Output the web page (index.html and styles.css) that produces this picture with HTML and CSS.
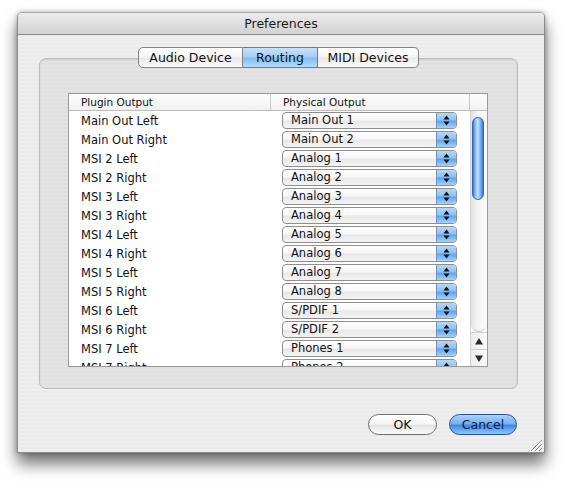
FILE: index.html
```html
<!DOCTYPE html>
<html lang="en">
<head>
  <meta charset="UTF-8">
  <title>Preferences</title>
  <link rel="stylesheet" href="styles.css">
</head>
<body>

  <div class="window">
    <div class="titlebar">Preferences</div>

    <div class="content">
      <div class="tabs">
        <span class="tab tab-audio">Audio Device</span>
        <span class="tab tab-routing active">Routing</span>
        <span class="tab tab-midi">MIDI Devices</span>
      </div>

      <div class="tabbox">
        <div class="table">
          <div class="thead">
            <div class="th col-name">Plugin Output</div>
            <div class="th col-out">Physical Output</div>
            <div class="th col-corner"></div>
          </div>
          <div class="tbody">
            <div class="rows">
              <div class="row"><span class="name">Main Out Left</span><div class="popup"><span class="label">Main Out 1</span><span class="arrows"><svg width="7" height="11" viewBox="0 0 7 11"><polygon points="0.5,4.5 6.5,4.5 3.5,0.5"/><polygon points="0.5,6.5 6.5,6.5 3.5,10.5"/></svg></span></div></div>
              <div class="row"><span class="name">Main Out Right</span><div class="popup"><span class="label">Main Out 2</span><span class="arrows"><svg width="7" height="11" viewBox="0 0 7 11"><polygon points="0.5,4.5 6.5,4.5 3.5,0.5"/><polygon points="0.5,6.5 6.5,6.5 3.5,10.5"/></svg></span></div></div>
              <div class="row"><span class="name">MSI 2 Left</span><div class="popup"><span class="label">Analog 1</span><span class="arrows"><svg width="7" height="11" viewBox="0 0 7 11"><polygon points="0.5,4.5 6.5,4.5 3.5,0.5"/><polygon points="0.5,6.5 6.5,6.5 3.5,10.5"/></svg></span></div></div>
              <div class="row"><span class="name">MSI 2 Right</span><div class="popup"><span class="label">Analog 2</span><span class="arrows"><svg width="7" height="11" viewBox="0 0 7 11"><polygon points="0.5,4.5 6.5,4.5 3.5,0.5"/><polygon points="0.5,6.5 6.5,6.5 3.5,10.5"/></svg></span></div></div>
              <div class="row"><span class="name">MSI 3 Left</span><div class="popup"><span class="label">Analog 3</span><span class="arrows"><svg width="7" height="11" viewBox="0 0 7 11"><polygon points="0.5,4.5 6.5,4.5 3.5,0.5"/><polygon points="0.5,6.5 6.5,6.5 3.5,10.5"/></svg></span></div></div>
              <div class="row"><span class="name">MSI 3 Right</span><div class="popup"><span class="label">Analog 4</span><span class="arrows"><svg width="7" height="11" viewBox="0 0 7 11"><polygon points="0.5,4.5 6.5,4.5 3.5,0.5"/><polygon points="0.5,6.5 6.5,6.5 3.5,10.5"/></svg></span></div></div>
              <div class="row"><span class="name">MSI 4 Left</span><div class="popup"><span class="label">Analog 5</span><span class="arrows"><svg width="7" height="11" viewBox="0 0 7 11"><polygon points="0.5,4.5 6.5,4.5 3.5,0.5"/><polygon points="0.5,6.5 6.5,6.5 3.5,10.5"/></svg></span></div></div>
              <div class="row"><span class="name">MSI 4 Right</span><div class="popup"><span class="label">Analog 6</span><span class="arrows"><svg width="7" height="11" viewBox="0 0 7 11"><polygon points="0.5,4.5 6.5,4.5 3.5,0.5"/><polygon points="0.5,6.5 6.5,6.5 3.5,10.5"/></svg></span></div></div>
              <div class="row"><span class="name">MSI 5 Left</span><div class="popup"><span class="label">Analog 7</span><span class="arrows"><svg width="7" height="11" viewBox="0 0 7 11"><polygon points="0.5,4.5 6.5,4.5 3.5,0.5"/><polygon points="0.5,6.5 6.5,6.5 3.5,10.5"/></svg></span></div></div>
              <div class="row"><span class="name">MSI 5 Right</span><div class="popup"><span class="label">Analog 8</span><span class="arrows"><svg width="7" height="11" viewBox="0 0 7 11"><polygon points="0.5,4.5 6.5,4.5 3.5,0.5"/><polygon points="0.5,6.5 6.5,6.5 3.5,10.5"/></svg></span></div></div>
              <div class="row"><span class="name">MSI 6 Left</span><div class="popup"><span class="label">S/PDIF 1</span><span class="arrows"><svg width="7" height="11" viewBox="0 0 7 11"><polygon points="0.5,4.5 6.5,4.5 3.5,0.5"/><polygon points="0.5,6.5 6.5,6.5 3.5,10.5"/></svg></span></div></div>
              <div class="row"><span class="name">MSI 6 Right</span><div class="popup"><span class="label">S/PDIF 2</span><span class="arrows"><svg width="7" height="11" viewBox="0 0 7 11"><polygon points="0.5,4.5 6.5,4.5 3.5,0.5"/><polygon points="0.5,6.5 6.5,6.5 3.5,10.5"/></svg></span></div></div>
              <div class="row"><span class="name">MSI 7 Left</span><div class="popup"><span class="label">Phones 1</span><span class="arrows"><svg width="7" height="11" viewBox="0 0 7 11"><polygon points="0.5,4.5 6.5,4.5 3.5,0.5"/><polygon points="0.5,6.5 6.5,6.5 3.5,10.5"/></svg></span></div></div>
              <div class="row"><span class="name">MSI 7 Right</span><div class="popup"><span class="label">Phones 2</span><span class="arrows"><svg width="7" height="11" viewBox="0 0 7 11"><polygon points="0.5,4.5 6.5,4.5 3.5,0.5"/><polygon points="0.5,6.5 6.5,6.5 3.5,10.5"/></svg></span></div></div>
            </div>

            <div class="scrollbar">
              <div class="track">
                <div class="thumb"></div>
              </div>
              <div class="step"><svg width="8" height="7" viewBox="0 0 8 7"><polygon points="0,6.5 8,6.5 4,0"/></svg></div>
              <div class="step"><svg width="8" height="7" viewBox="0 0 8 7"><polygon points="0,0.5 8,0.5 4,7"/></svg></div>
            </div>
          </div>
        </div>
      </div>

      <div class="buttons">
        <button class="btn">OK</button>
        <button class="btn default">Cancel</button>
      </div>
    </div>

    <svg class="grip" width="12" height="12" viewBox="0 0 12 12">
      <line x1="1" y1="12" x2="12" y2="1" stroke="#8a8a8a"/>
      <line x1="2" y1="12" x2="12" y2="2" stroke="#fff"/>
      <line x1="5" y1="12" x2="12" y2="5" stroke="#8a8a8a"/>
      <line x1="6" y1="12" x2="12" y2="6" stroke="#fff"/>
      <line x1="9" y1="12" x2="12" y2="9" stroke="#8a8a8a"/>
    </svg>
  </div>

</body>
</html>
```

FILE: styles.css
```css
html, body {
  height: 100%;
}
body {
  box-sizing: border-box;
  margin: 0;
  padding: 12px 0 0 17px;
  background: #fff;
  font-family: "DejaVu Sans", "Liberation Sans", sans-serif;
  font-size: 11.5px;
  color: #111;
}
.window {
  position: relative;
  box-sizing: border-box;
  width: 528px;
  height: 441px;
  border: 1px solid #8c8c8c;
  border-top-color: #a8a8a8;
  border-radius: 5px 5px 0 0;
  background: repeating-linear-gradient(#efefef 0 2px, #eaeaea 2px 4px);
  box-shadow: 0 11px 16px rgba(0,0,0,0.55), 0 0 5px rgba(0,0,0,0.3);
}
.titlebar {
  height: 21px;
  line-height: 21px;
  text-align: center;
  font-size: 12.5px;
  color: #1a1a1a;
  border-bottom: 1px solid #8a8a8a;
  border-radius: 4px 4px 0 0;
  background: linear-gradient(#ececec, #dcdcdc 60%, #d2d2d2);
}
.content {
  padding: 12px 26px 0 21px;
}

/* tabs */
.tabs {
  position: relative;
  z-index: 1;
  display: flex;
  justify-content: center;
}
.tab {
  box-sizing: border-box;
  height: 21px;
  line-height: 19px;
  text-align: center;
  font-size: 12.5px;
  border: 1px solid #838383;
  border-left: none;
  background: linear-gradient(#ffffff, #f6f6f6 45%, #e9e9e9 55%, #fbfbfb);
}
.tab-audio { width: 105px; border-left: 1px solid #838383; border-radius: 5px 0 0 5px; }
.tab-routing { width: 75px; }
.tab-midi { width: 101px; border-radius: 0 5px 5px 0; }
.tab.active {
  border-color: #5a7fae;
  background: linear-gradient(#c6e1fb, #a7cff5 45%, #84bdf1 55%, #b6dbfb);
}
.tabbox {
  box-sizing: border-box;
  width: 479px;
  height: 331px;
  margin-top: -10px;
  padding: 34px 0 0 28px;
  border: 1px solid #bcbcbc;
  border-radius: 7px;
  background: rgba(0,0,0,0.045);
  box-shadow: inset 0 1px 2px rgba(0,0,0,0.08);
}

/* table */
.table {
  box-sizing: border-box;
  width: 420px;
  height: 274px;
  border: 1px solid #9a9a9a;
  background: #fff;
  overflow: hidden;
}
.thead {
  display: flex;
  height: 16px;
  border-bottom: 1px solid #bdbdbd;
  background: linear-gradient(#fdfdfd, #f1f1f1);
}
.th {
  box-sizing: border-box;
  line-height: 16px;
  font-size: 10.5px;
  padding-left: 12px;
  border-right: 1px solid #c9c9c9;
}
.col-name { width: 202px; }
.col-out { width: 199px; }
.col-corner { width: 17px; border-right: none; }
.tbody {
  display: flex;
  height: 255px;
}
.rows {
  width: 401px;
  overflow: hidden;
}
.row {
  display: flex;
  align-items: center;
  height: 19px;
}
.name {
  width: 201px;
  padding-left: 12px;
  box-sizing: border-box;
}
.popup {
  box-sizing: border-box;
  display: flex;
  width: 175px;
  height: 17px;
  margin-left: 12px;
  border: 1px solid #8f8f8f;
  border-radius: 4px;
  background: linear-gradient(#ffffff, #f7f7f7 45%, #e8e8e8 55%, #f4f4f4);
}
.label {
  flex: 1;
  padding-left: 8px;
  line-height: 15px;
}
.arrows {
  display: flex;
  align-items: center;
  justify-content: center;
  width: 19px;
  border-left: 1px solid #6f93c4;
  border-radius: 0 3px 3px 0;
  background: linear-gradient(#b5d8fb, #8cc3f5 45%, #5fa6ee 55%, #a4d2fb);
}
.arrows svg { fill: #111; }

/* scroller */
.scrollbar {
  display: flex;
  flex-direction: column;
  width: 17px;
  border-left: 1px solid #d2d2d2;
  box-sizing: border-box;
}
.track {
  flex: 1;
  border-bottom: 1px solid #c4c4c4;
  border-radius: 0 0 8px 8px;
  background: linear-gradient(90deg, #e2e2e2, #f4f4f4 40%, #fbfbfb);
}
.thumb {
  width: 12px;
  height: 83px;
  margin: 6px 0 0 1px;
  box-sizing: border-box;
  border: 1px solid #3567b8;
  border-radius: 6px;
  background: linear-gradient(90deg, #3d78d6, #7eb4f1 20%, #c2e0fc 45%, #a3cdf8 60%, #5d9ce9 85%, #3c73cf);
}
.step {
  display: flex;
  align-items: center;
  justify-content: center;
  height: 16px;
  border-top: 1px solid #d0d0d0;
  background: linear-gradient(90deg, #ececec, #fafafa);
}
.step svg { fill: #2a2a2a; }

/* buttons */
.buttons {
  display: flex;
  justify-content: flex-end;
  gap: 12px;
  margin: 25px 1px 0 0;
}
.btn {
  box-sizing: border-box;
  width: 69px;
  height: 21px;
  padding: 0;
  font-family: "DejaVu Sans", "Liberation Sans", sans-serif;
  font-size: 12.5px;
  color: #111;
  border: 1px solid #6e6e6e;
  border-radius: 11px;
  background: linear-gradient(#ffffff, #f5f5f5 45%, #e4e4e4 55%, #fafafa);
}
.btn.default {
  width: 68px;
  border-color: #2a4f8c;
  color: #10203a;
  background: linear-gradient(#a8d1fa, #74b2f2 45%, #3f8ae8 55%, #8ec8fb);
}
.grip {
  position: absolute;
  right: 2px;
  bottom: 1px;
}
```
